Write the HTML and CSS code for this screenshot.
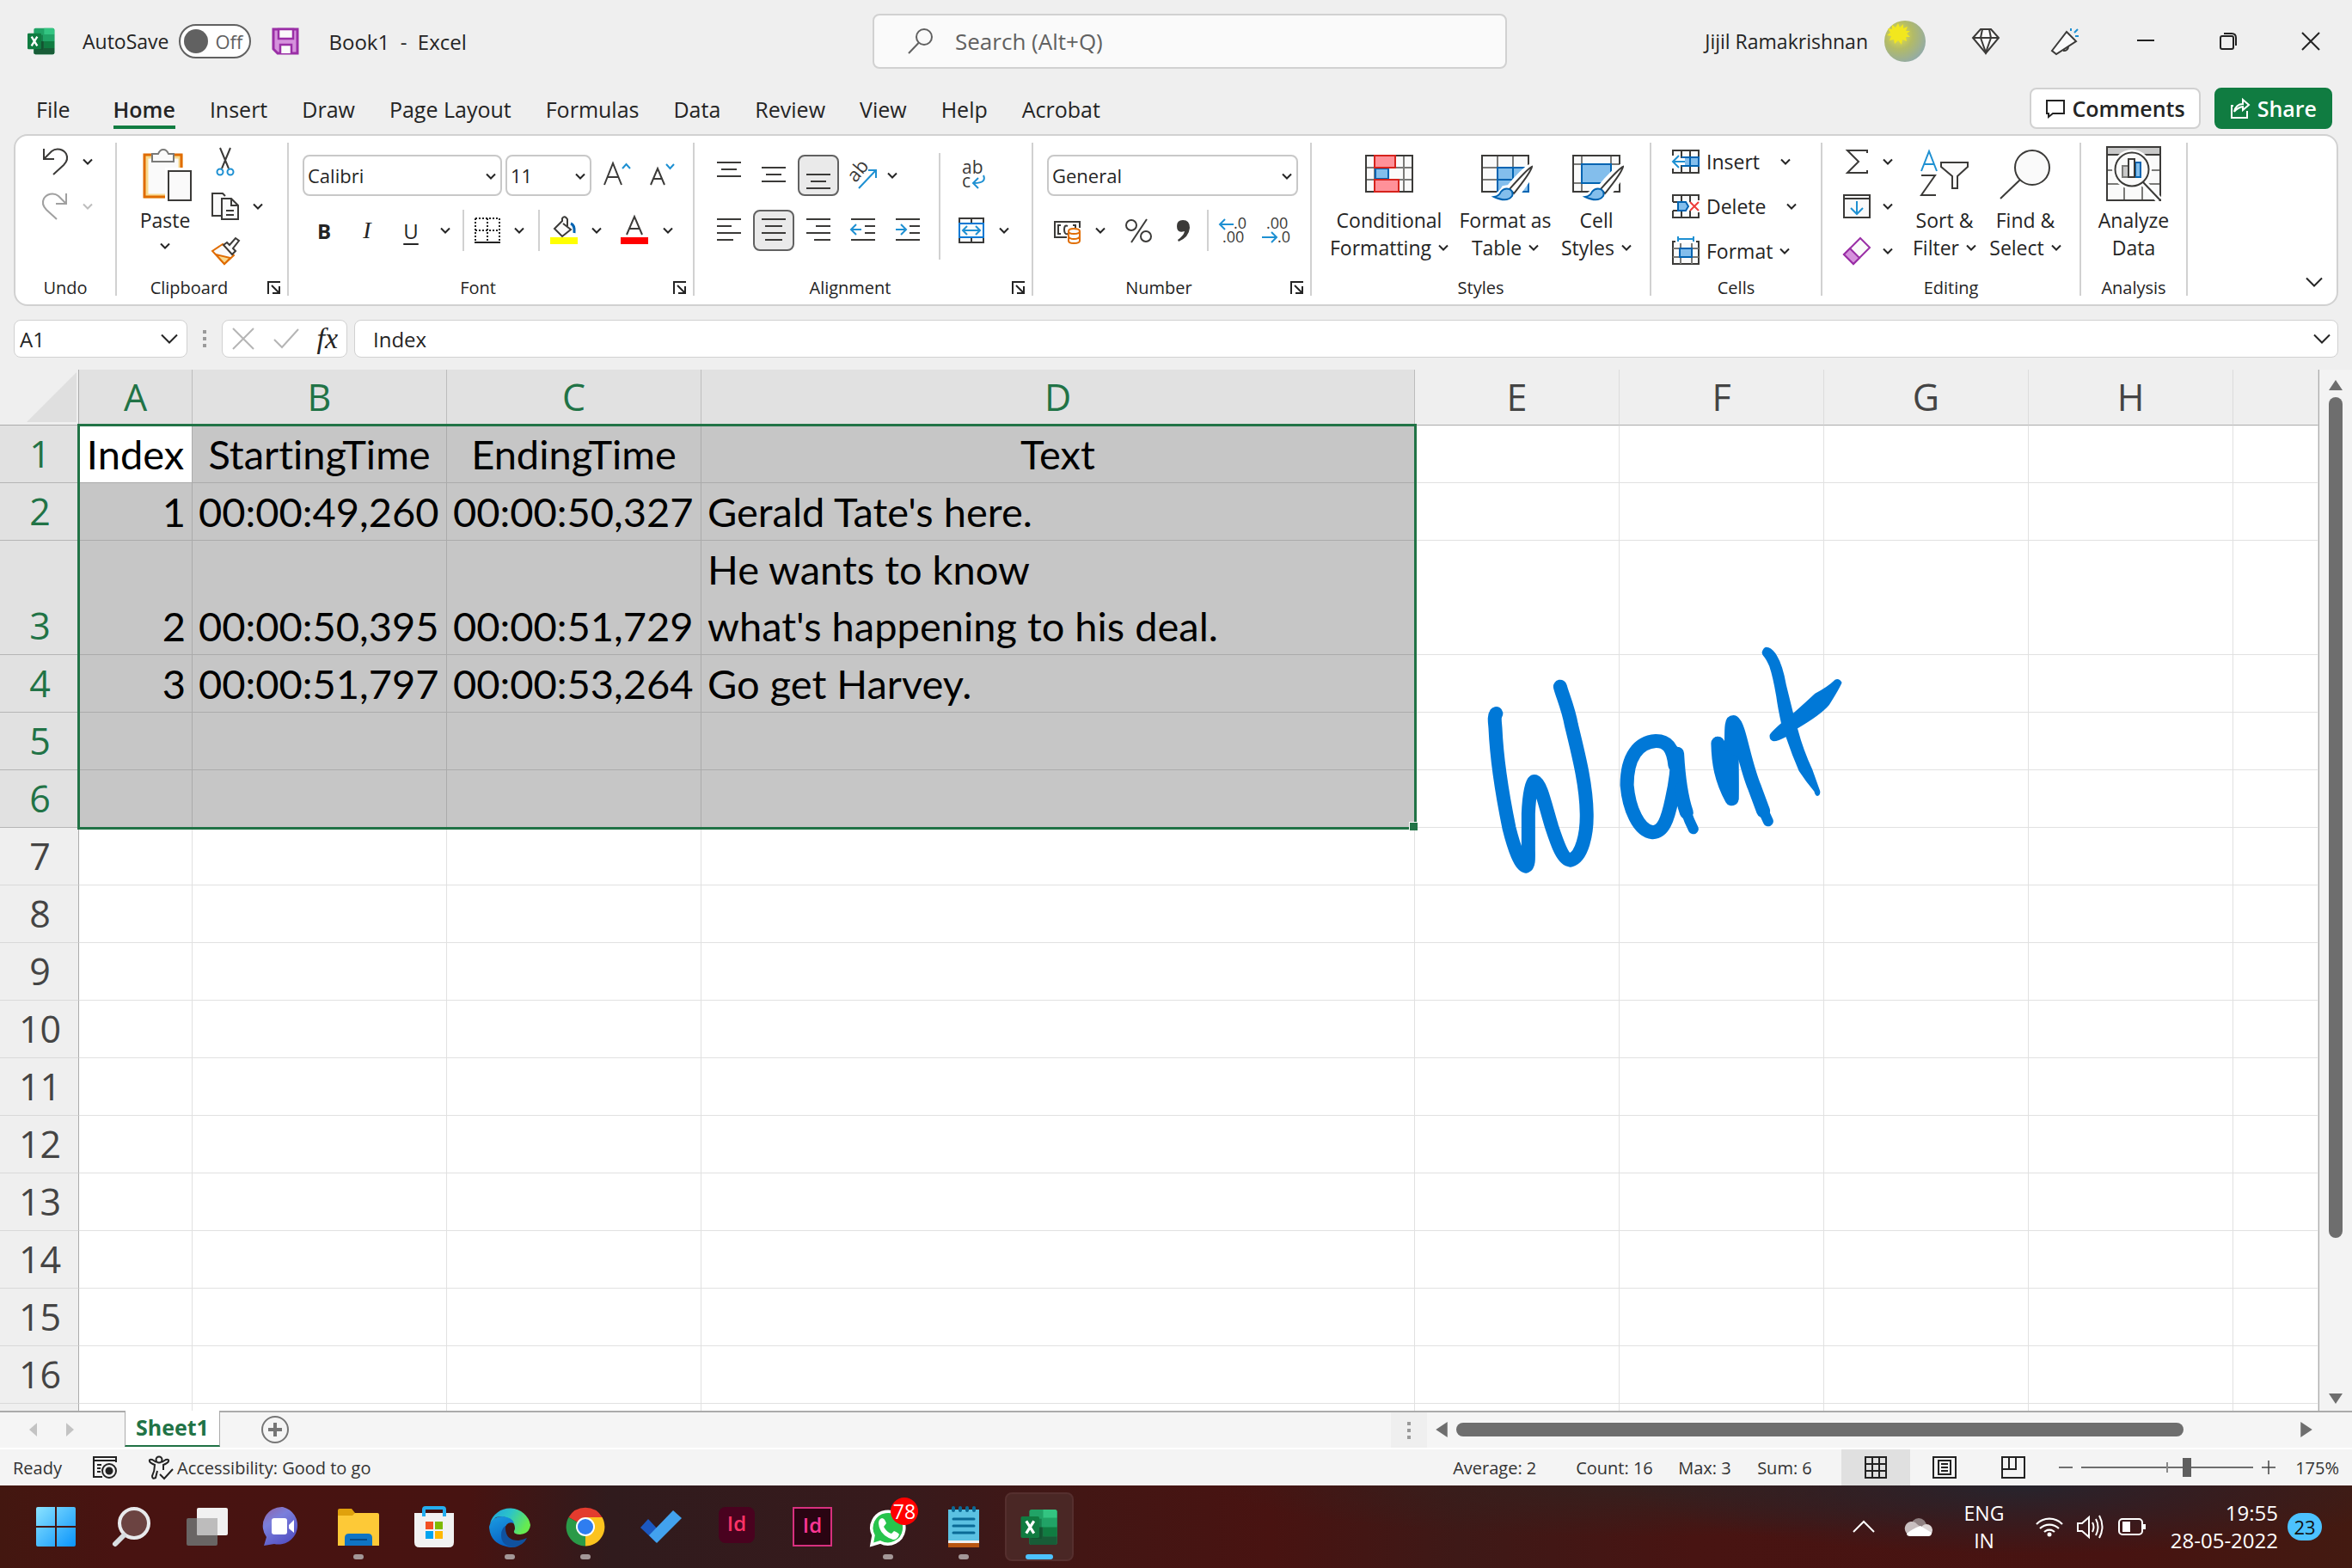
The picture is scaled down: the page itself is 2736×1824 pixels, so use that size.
FILE: index.html
```html
<!DOCTYPE html>
<html lang="en">
<head>
<meta charset="utf-8">
<title>Book1 - Excel</title>
<link rel="stylesheet" href="styles.css">
</head>
<body>
<svg class="defs" aria-hidden="true">
  <symbol id="chev" viewBox="0 0 12 8"><path d="M1 1.5 6 6.5 11 1.5" fill="none" stroke="currentColor" stroke-width="2"/></symbol>
  <symbol id="chev-lg" viewBox="0 0 20 12"><path d="M1 1.500 10 10.500 19 1.500" fill="none" stroke="currentColor" stroke-width="2"/></symbol>
  <symbol id="launch" viewBox="0 0 16 16"><path d="M1 15V1H15M5 5 14 14M14 6V14H6" fill="none" stroke="currentColor" stroke-width="2"/></symbol>
  <symbol id="brush" viewBox="0 0 64 64">
    <path d="M63 22C58 22 43 38 36 47L30 48Q26 56 17 58L34 66L46 58L66 30Z" fill="#fff" stroke="#fff" stroke-width="4"/>
    <path d="M63 24C58 26 45 41 37 50L42 55C50 45 61 32 63 24Z" fill="#fff" stroke="#3b3a38" stroke-width="2"/>
    <path d="M19 59Q25 58 27 53Q31 48 37 50Q42 53 40 58Q34 66 19 59Z" fill="#83beec" stroke="#0063b1" stroke-width="2"/>
  </symbol>
  <symbol id="excel" viewBox="0 0 48 48">
    <rect x="11" y="1" width="36" height="46" rx="3" fill="#21a366"/>
    <path d="M29 1H44Q47 1 47 4V12H29Z" fill="#33c481"/><path d="M29 12H47V24H29Z" fill="#21a366"/>
    <path d="M29 24H47V36H29Z" fill="#107c41"/><path d="M11 24H29V36H47V44Q47 47 44 47H14Q11 47 11 44Z" fill="#185c37"/>
    <rect x="14" y="13" width="13" height="26" fill="#0b4a28" opacity=".4"/>
    <rect x="0" y="10" width="24" height="28" rx="2" fill="#107c41"/>
    <path d="M7 16 17 32M17 16 7 32" stroke="#fff" stroke-width="3.600"/>
  </symbol>
</svg>

<header class="titlebar">
  <div class="title-left">
    <svg class="s32" viewBox="0 0 48 48"><use href="#excel"/></svg>
    <label class="autosave" for="autosave">AutoSave
      <span class="toggle"><input type="checkbox" id="autosave"><span class="knob"></span><span>Off</span></span>
    </label>
    <button class="plain" aria-label="Save"><svg class="s32" viewBox="0 0 32 32"><path d="M2 2H30V30H7L2 25Z" fill="#d592dc" stroke="#9a2fa6" stroke-width="3"/><path d="M8 2H25V13H8ZM10 30V20H23V30" fill="#fafafa" stroke="#9a2fa6" stroke-width="2.500"/></svg></button>
    <span class="doc">Book1&nbsp; -&nbsp; Excel</span>
  </div>
  <label class="search">
    <svg class="s32" viewBox="0 0 32 32" fill="none" stroke="#616161" stroke-width="2"><circle cx="20" cy="11" r="9"/><path d="M13.500 18 2 30"/></svg>
    <input type="text" placeholder="Search (Alt+Q)" aria-label="Search">
  </label>
  <div class="title-right">
    <span class="user">Jijil Ramakrishnan</span>
    <svg class="avatar" viewBox="0 0 48 48"><defs><radialGradient id="sky" cx=".35" cy=".35" r=".75"><stop offset="0" stop-color="#e8e24a"/><stop offset=".45" stop-color="#b3bb66"/><stop offset="1" stop-color="#8fa9ae"/></radialGradient></defs><circle cx="24" cy="24" r="24" fill="url(#sky)"/><path d="M16 3 18 8 22 4 22 9 27 7 25 12 30 12 26 15 30 19 25 19 26 24 21 22 20 28 16 23 12 27 11 22 6 23 8 18 3 17 7 14 4 9 9 10 9 5 13 8Z" fill="#f2e71e"/></svg>
    <button class="win w92" aria-label="Premium"><svg class="s32" viewBox="0 0 32 32" fill="#fafafa" stroke="#3b3a38" stroke-width="2"><path d="M10 2H22L31 12 16 30 1 12Z"/><path fill="none" d="M1 12H31M12 2 10 12 16 29 22 12 20 2"/></svg></button>
    <button class="win w92" aria-label="Coming soon"><svg class="s32" viewBox="0 0 32 32" fill="#fafafa" stroke="#3b3a38" stroke-width="2"><path fill="none" d="M14 27A5 5 0 0 0 20 22"/><path d="M18 5 29 16 6 31 1 27Z"/><path d="M23 1V4M27 6 31 2M28 10H32" stroke="#1e90d2"/></svg></button>
    <button class="win w96" aria-label="Minimize"><svg class="s20" viewBox="0 0 20 20"><path d="M0 9H20" stroke="#222" stroke-width="2"/></svg></button>
    <button class="win w96" aria-label="Restore"><svg class="s20" viewBox="0 0 20 20" fill="none" stroke="#222" stroke-width="2"><rect x="1" y="4" width="15" height="15" rx="2"/><path d="M5 1H14Q19 1 19 6V15"/></svg></button>
    <button class="win w96" aria-label="Close"><svg class="s20" viewBox="0 0 20 20"><path d="M0 0 20 20M20 0 0 20" stroke="#222" stroke-width="2"/></svg></button>
  </div>
</header>

<nav class="tabs">
  <a href="#file" class="file">File</a><a href="#home" class="on">Home</a><a href="#insert">Insert</a><a href="#draw">Draw</a><a href="#layout">Page Layout</a><a href="#formulas">Formulas</a><a href="#data">Data</a><a href="#review">Review</a><a href="#view">View</a><a href="#help">Help</a><a href="#acrobat">Acrobat</a>
  <span class="grow"></span>
  <button class="pill"><svg class="s24" viewBox="0 0 24 24"><path d="M2 3H22V18H9L4 22V18H2Z" fill="none" stroke="#222" stroke-width="2"/></svg>Comments</button>
  <button class="pill share"><svg class="s24" viewBox="0 0 24 24" fill="none" stroke="#fff" stroke-width="2"><path d="M4 9H2V23H20V15"/><path d="M5 16Q7 7 15 7V2L22 8 15 14V10Q9 11 5 16Z"/></svg>Share</button>
</nav>

<section class="ribbon">
  <div class="group g-undo">
    <div class="body stack">
      <div class="line"><button class="w36" aria-label="Undo"><svg class="s32" viewBox="0 0 32 32" fill="none" stroke="#3b3a38" stroke-width="2"><path d="M3 1V13H15"/><path d="M3 13 12 4C18-1 26 2 29 7C32 13 29 17 26 20L14 31"/></svg></button><button class="w40" aria-label="Undo options"><svg class="chev"><use href="#chev"/></svg></button></div>
      <div class="line dim"><button class="w36" aria-label="Redo"><svg class="s32" viewBox="0 0 32 32" fill="none" stroke="#a0a0a0" stroke-width="2"><path d="M29 1V13H17"/><path d="M29 13 20 4C14-1 6 2 3 7C0 13 3 17 6 20L18 31"/></svg></button><button class="w40" aria-label="Redo options"><svg class="chev"><use href="#chev"/></svg></button></div>
    </div>
    <div class="foot"><span>Undo</span></div>
  </div>

  <div class="group g-clip">
    <div class="body">
      <button class="big w84"><svg class="s64" viewBox="0 0 64 64"><path d="M10 12H50V58H10Z" fill="#fafafa" stroke="#f8d98f" stroke-width="5"/><path d="M8 10H51V59H8Z" fill="none" stroke="#e06c00" stroke-width="3"/><path d="M17 9H24Q26 4 30 4Q34 4 36 9H42V18H17Z" fill="#fafafa" stroke="#7a7a78" stroke-width="2"/><path d="M32 25H64V64H32Z" fill="#fff"/><path d="M36 29H62V63H36Z" fill="#fafafa" stroke="#3b3a38" stroke-width="2"/></svg><span>Paste</span><svg class="chev"><use href="#chev"/></svg></button>
      <div class="stack">
        <div class="line"><button class="w56" aria-label="Cut"><svg class="s32" viewBox="0 0 32 32" fill="none" stroke="#3b3a38" stroke-width="2"><path d="M10 0 20 24M22 0 12 24"/><circle cx="10" cy="28" r="3.500" stroke="#1e90d2"/><circle cx="22" cy="28" r="3.500" stroke="#1e90d2"/></svg></button></div>
        <div class="line"><button class="w56" aria-label="Copy"><svg class="s32" viewBox="0 0 32 32" fill="#fafafa" stroke="#3b3a38" stroke-width="2"><path d="M11 27H1V1H13L16 4"/><path d="M12 7H23L31 15V31H12Z"/><path d="M23 7V15H31M17 21H26M17 26H26" fill="none"/></svg></button><button class="w20" aria-label="Copy options"><svg class="chev"><use href="#chev"/></svg></button></div>
        <div class="line"><button class="w56" aria-label="Format Painter"><svg class="s32" viewBox="0 0 32 32"><path d="M1 16 13 8 26 21 15 31Z" fill="#fafafa" stroke="#e06c00" stroke-width="2"/><path d="M5 20 22 24 15 31Z" fill="#f8d98f" stroke="#e06c00" stroke-width="2"/><path d="M14 9 18 6 21 9 28 1 32 4 25 13 28 16 24 20Z" fill="#fafafa" stroke="#3b3a38" stroke-width="2"/></svg></button></div>
      </div>
    </div>
    <div class="foot"><span>Clipboard</span><button class="w30" aria-label="Clipboard settings"><svg class="s16"><use href="#launch"/></svg></button></div>
  </div>

  <div class="group g-font">
    <div class="body rows">
      <div class="line tall">
        <span class="combo w232"><select aria-label="Font"><option>Calibri</option></select><svg class="chev"><use href="#chev"/></svg></span>
        <span class="combo w100"><select aria-label="Font size"><option>11</option></select><svg class="chev"><use href="#chev"/></svg></span>
        <button class="w52" aria-label="Increase font size"><svg class="s32" viewBox="0 0 32 32" fill="none" stroke="#3b3a38" stroke-width="2"><path d="M1 27 11 2 21 27M5 18H17"/><path d="M22 8 26.500 3 31 8" stroke="#1e90d2"/></svg></button>
        <button class="w52" aria-label="Decrease font size"><svg class="s32" viewBox="0 0 32 32" fill="none" stroke="#3b3a38" stroke-width="2"><path d="M3 27 11 8 19 27M6 20H16"/><path d="M21 3 25.500 8 30 3" stroke="#1e90d2"/></svg></button>
      </div>
      <div class="line tall">
        <button class="w50 bold">B</button><button class="w50 ital">I</button><button class="w52 under">U</button><button class="w28" aria-label="Underline options"><svg class="chev"><use href="#chev"/></svg></button>
        <i class="sep w14"></i>
        <button class="w42" aria-label="Borders"><svg class="s32" viewBox="0 0 32 32" fill="none" stroke="#222" stroke-width="2"><path d="M2 2H30M2 16H30M2 2V28M16 2V28M30 2V28" stroke-dasharray="2 2"/><path d="M1 30H31"/></svg></button><button class="w32" aria-label="Border options"><svg class="chev"><use href="#chev"/></svg></button>
        <i class="sep w14"></i>
        <button class="w44" aria-label="Fill color"><svg class="s32" viewBox="0 0 32 32" fill="none" stroke="#3b3a38" stroke-width="2"><path d="M15 8 24 15 14 23 5 14 14 5V2Q17-2 20 3V11" fill="#fafafa"/><path d="M24 8Q29 10 28 19" stroke="#0063b1" stroke-width="3"/><path d="M0 24H32V32H0Z" fill="#ffff00" stroke="none"/></svg></button><button class="w32" aria-label="Fill color options"><svg class="chev"><use href="#chev"/></svg></button>
        <button class="w56" aria-label="Font color"><svg class="s32" viewBox="0 0 32 32" fill="none" stroke="#3b3a38" stroke-width="2"><path d="M7 21 16 0 25 21M10 14H22"/><path d="M0 24H32V32H0Z" fill="#ff0000" stroke="none"/></svg></button><button class="w22" aria-label="Font color options"><svg class="chev"><use href="#chev"/></svg></button>
      </div>
    </div>
    <div class="foot"><span>Font</span><button class="w30" aria-label="Font settings"><svg class="s16"><use href="#launch"/></svg></button></div>
  </div>

  <div class="group g-align">
    <div class="body">
      <div class="rows w256">
        <div class="line tall gap4">
          <button class="w48" aria-label="Top align"><svg class="ln" viewBox="0 0 32 32"><path d="M2 1H30M7 9H25M2 17H30"/></svg></button>
          <button class="w48" aria-label="Middle align"><svg class="ln" viewBox="0 0 32 32"><path d="M2 7H30M7 15H25M2 23H30"/></svg></button>
          <button class="w48 pressed" aria-label="Bottom align"><svg class="ln" viewBox="0 0 32 32"><path d="M2 15H30M7 23H25M2 31H30"/></svg></button>
          <button class="w48" aria-label="Orientation"><svg class="s32" viewBox="0 0 32 32"><text x="2" y="22" font-size="22" transform="rotate(-50 8 18)" fill="#3b3a38">ab</text><path d="M11 31 31 10M22 10H31V19" fill="none" stroke="#1e90d2" stroke-width="2"/></svg></button>
          <button class="w20" aria-label="Orientation options"><svg class="chev"><use href="#chev"/></svg></button>
        </div>
        <div class="line tall gap4">
          <button class="w48" aria-label="Align left"><svg class="ln" viewBox="0 0 32 32"><path d="M2 3H30M2 11H19M2 19H30M2 27H21"/></svg></button>
          <button class="w48 pressed" aria-label="Center"><svg class="ln" viewBox="0 0 32 32"><path d="M2 3H30M6 11H26M2 19H30M6 27H26"/></svg></button>
          <button class="w48" aria-label="Align right"><svg class="ln" viewBox="0 0 32 32"><path d="M2 3H30M13 11H30M2 19H30M11 27H30"/></svg></button>
          <button class="w48" aria-label="Decrease indent"><svg class="ln" viewBox="0 0 32 32"><path d="M2 3H30M18 11H30M18 19H30M2 27H30"/><path d="M14 15H3M8 9 2 15 8 21" stroke="#1e90d2"/></svg></button>
          <button class="w48" aria-label="Increase indent"><svg class="ln" viewBox="0 0 32 32"><path d="M2 3H30M18 11H30M18 19H30M2 27H30"/><path d="M2 15H13M8 9 14 15 8 21" stroke="#1e90d2"/></svg></button>
        </div>
      </div>
      <i class="sep w26 long"></i>
      <div class="rows">
        <div class="line tall"><button class="w52" aria-label="Wrap text"><svg class="s32" viewBox="0 0 32 32"><text x="3" y="14" font-size="21" fill="#3b3a38">ab</text><text x="3" y="30" font-size="21" fill="#3b3a38">c</text><path d="M28 16Q32 25 17 25M22 19 16 25 22 31" fill="none" stroke="#1e90d2" stroke-width="2"/></svg></button></div>
        <div class="line tall"><button class="w48" aria-label="Merge and center"><svg class="s32" viewBox="0 0 32 32" fill="#fafafa" stroke="#3b3a38" stroke-width="2"><path d="M2 2H30V30H2ZM16 2V30"/><path d="M2 8H30V24H2Z" fill="#fafafa" stroke="#0078d4"/><path d="M6 16H26M11 11 6 16 11 21M21 11 26 16 21 21" fill="none" stroke="#1e90d2"/></svg></button><button class="w28" aria-label="Merge options"><svg class="chev"><use href="#chev"/></svg></button></div>
      </div>
    </div>
    <div class="foot"><span>Alignment</span><button class="w30" aria-label="Alignment settings"><svg class="s16"><use href="#launch"/></svg></button></div>
  </div>

  <div class="group g-num">
    <div class="body rows">
      <div class="line tall"><span class="combo w292"><select aria-label="Number format"><option>General</option></select><svg class="chev"><use href="#chev"/></svg></span></div>
      <div class="line tall">
        <button class="w48" aria-label="Accounting format"><svg class="s32" viewBox="0 0 32 32" fill="none" stroke="#3b3a38" stroke-width="2"><path d="M30 13V6H1V24H15"/><path d="M8 10H5V20H8M16 11Q12 9 12 15Q12 21 16 20M22 10H25V13"/><path d="M17 17V28Q17 31 23 31Q30 31 30 28V17Q30 14 23 14Q17 14 17 17Q17 20 23 20Q30 20 30 17M17 23Q18 26 23 26Q29 26 30 23" fill="#fafafa" stroke="#e06c00"/></svg></button><button class="w28" aria-label="Accounting options"><svg class="chev"><use href="#chev"/></svg></button>
        <button class="w60" aria-label="Percent style"><svg class="s32" viewBox="0 0 32 32" fill="none" stroke="#3b3a38" stroke-width="2"><circle cx="8" cy="10" r="6"/><circle cx="25" cy="23" r="6"/><path d="M26 3 8 30"/></svg></button>
        <button class="w44" aria-label="Comma style"><svg class="s32" viewBox="0 0 32 32"><path d="M16 4Q24 4 24 13Q23 24 11 29L10 27Q17 22 18 17Q9 20 9 11Q9 4 16 4Z" fill="#3b3a38"/></svg></button>
        <i class="sep w14"></i>
        <button class="w42" aria-label="Increase decimal"><svg class="s32" viewBox="0 0 32 32"><text x="18" y="14" font-size="18" fill="#3b3a38">.0</text><text x="5" y="30" font-size="18" fill="#3b3a38">.00</text><path d="M18 9H2M8 3 2 9 8 15" fill="none" stroke="#1e90d2" stroke-width="2"/></svg></button>
        <button class="w60" aria-label="Decrease decimal"><svg class="s32" viewBox="0 0 32 32"><text x="5" y="14" font-size="18" fill="#3b3a38">.00</text><text x="18" y="30" font-size="18" fill="#3b3a38">.0</text><path d="M0 24H16M11 18 17 24 11 30" fill="none" stroke="#1e90d2" stroke-width="2"/></svg></button>
      </div>
    </div>
    <div class="foot"><span>Number</span><button class="w30" aria-label="Number settings"><svg class="s16"><use href="#launch"/></svg></button></div>
  </div>

  <div class="group g-styles">
    <div class="body">
      <button class="big w152"><svg class="s64" viewBox="0 0 64 64"><path d="M5 11H59V53H5Z" fill="#fafafa"/><path d="M15 11V53M49 11V53M5 25H59M5 39H59" stroke="#7a7a78" stroke-width="2"/><path d="M5 11H59V53H5Z" fill="none" stroke="#3b3a38" stroke-width="2"/><path d="M16 26H31V38H16Z" fill="#83beec" stroke="#0063b1" stroke-width="2"/><path d="M15 11H39V25H15ZM15 39H43V53H15Z" fill="#ff9199" stroke="#d6231c" stroke-width="2"/></svg><span>Conditional</span><span>Formatting <svg class="chev"><use href="#chev"/></svg></span></button>
      <button class="big w118"><svg class="s64" viewBox="0 0 64 64"><path d="M5 11H59V53H5Z" fill="#fafafa"/><path d="M23 11V25M41 11V25M5 25H23M5 39H23" stroke="#7a7a78" stroke-width="2"/><path d="M5 11H59V53H5Z" fill="none" stroke="#3b3a38" stroke-width="2"/><path d="M23 25H59V53H23ZM41 25V53M23 39H59" fill="#83beec" stroke="#0063b1" stroke-width="2"/><use href="#brush" width="64" height="64"/></svg><span>Format as</span><span>Table <svg class="chev"><use href="#chev"/></svg></span></button>
      <button class="big w94"><svg class="s64" viewBox="0 0 64 64"><path d="M5 11H59V53H5Z" fill="#fafafa"/><path d="M15 11V53M49 11V53M5 21H59M5 43H59" stroke="#7a7a78" stroke-width="2"/><path d="M5 11H59V53H5Z" fill="none" stroke="#3b3a38" stroke-width="2"/><path d="M15 21H49V43H15Z" fill="#83beec" stroke="#0063b1" stroke-width="2"/><use href="#brush" width="64" height="64"/></svg><span>Cell</span><span>Styles <svg class="chev"><use href="#chev"/></svg></span></button>
    </div>
    <div class="foot"><span>Styles</span></div>
  </div>

  <div class="group g-cells">
    <div class="body stack">
      <button class="cmd"><svg class="s32" viewBox="0 0 32 32" fill="#fafafa" stroke="#3b3a38" stroke-width="2"><path d="M1 3H31V29H1ZM11 3V29M21 3V29"/><path d="M12 11H31V21H12ZM21 11V21" fill="#83beec" stroke="#0063b1"/><path d="M0 9H9V12H15V20H9V24H0Z" fill="#fff" stroke="none"/><path d="M15 16H1M8 9 1 16 8 23" fill="none" stroke="#1e90d2"/></svg><span>Insert</span><svg class="chev far"><use href="#chev"/></svg></button>
      <button class="cmd"><svg class="s32" viewBox="0 0 32 32" fill="#fafafa" stroke="#3b3a38" stroke-width="2"><path d="M1 11V3H31V9M11 3V11M21 3V11M1 21V29H31V23M11 21V29M21 21V29M1 11H6M1 21H6"/><path d="M7 11H16L19 16 16 21H7Z" fill="#83beec" stroke="#0063b1"/><path d="M21 11 31 21M31 11 21 21" stroke="#ee3d3a"/></svg><span>Delete</span><svg class="chev far"><use href="#chev"/></svg></button>
      <button class="cmd"><svg class="s32" viewBox="0 0 32 32" fill="#fafafa" stroke="#3b3a38" stroke-width="2"><path d="M1 5H31V31H1Z" /><path d="M4 4H28" stroke="#fff" stroke-width="5"/><path d="M10 7V31M23 7V31M1 13H31M1 23H31" stroke="#7a7a78"/><path d="M9 13H23V23H9Z" fill="#83beec" stroke="#0063b1"/><path d="M7 2H25M7-1V5M25-1V5" stroke="#1e90d2"/></svg><span>Format</span><svg class="chev"><use href="#chev"/></svg></button>
    </div>
    <div class="foot"><span>Cells</span></div>
  </div>

  <div class="group g-edit">
    <div class="body">
      <div class="stack">
        <div class="line"><button class="w40" aria-label="AutoSum"><svg class="s32" viewBox="0 0 32 32" fill="none" stroke="#3b3a38" stroke-width="2"><path d="M28 6V3H5L18 16 5 29H28V26"/></svg></button><button class="w32" aria-label="AutoSum options"><svg class="chev"><use href="#chev"/></svg></button></div>
        <div class="line"><button class="w40" aria-label="Fill"><svg class="s32" viewBox="0 0 32 32" fill="#fafafa" stroke="#3b3a38" stroke-width="2"><path d="M1 3H31V29H1ZM1 7H31"/><path d="M16 10V24M9 18 16 25 23 18" fill="none" stroke="#1e90d2"/></svg></button><button class="w32" aria-label="Fill options"><svg class="chev"><use href="#chev"/></svg></button></div>
        <div class="line"><button class="w40" aria-label="Clear"><svg class="s32" viewBox="0 0 32 32" fill="#fafafa" stroke="#9a2fa6" stroke-width="2"><path d="M20 1 31 12 12 31 1 20Z"/><path d="M8 13 1 20 12 31 19 24Z" fill="#d592dc"/></svg></button><button class="w32" aria-label="Clear options"><svg class="chev"><use href="#chev"/></svg></button></div>
      </div>
      <button class="big w100"><svg class="s64" viewBox="0 0 64 64" fill="none" stroke="#3b3a38" stroke-width="2"><path d="M5 29 14 6 23 29M8 21H20" stroke="#1e90d2"/><path d="M5 34H21L5 57H22"/><path d="M28 19H59V24L47 35V49H41V35L28 24Z" fill="#fafafa"/></svg><span>Sort &amp;</span><span>Filter <svg class="chev"><use href="#chev"/></svg></span></button>
      <button class="big w88"><svg class="s64" viewBox="0 0 64 64" fill="none" stroke="#3b3a38" stroke-width="2"><circle cx="40" cy="25" r="20" fill="#fafafa"/><path d="M26 39 3 61"/></svg><span>Find &amp;</span><span>Select <svg class="chev"><use href="#chev"/></svg></span></button>
    </div>
    <div class="foot"><span>Editing</span></div>
  </div>

  <div class="group g-analysis">
    <div class="body">
      <button class="big w122"><svg class="s64" viewBox="0 0 64 64" fill="none" stroke="#3b3a38" stroke-width="2"><path d="M1 1H63V63H1Z" fill="#fafafa"/><path d="M1 1H63V10H1Z" fill="#c8c8c8"/><path d="M1 28H63M1 44H63M21 44V63M42 44V63" stroke="#7a7a78"/><path d="M1 1H63V63H1ZM1 10H63"/><circle cx="30" cy="27" r="23" fill="#fff" stroke="none"/><path d="M43 42 62 63" stroke="#fff" stroke-width="8"/><circle cx="30" cy="27" r="19.500" fill="#fafafa"/><path d="M43 42 63 63"/><path d="M19 23H26V36H19Z" fill="#c8c8c8" stroke="#7a7a78"/><path d="M34 19H40V36H34Z" fill="#83beec" stroke="#0063b1"/><path d="M26 15H33V36H26Z" fill="#fafafa"/></svg><span>Analyze</span><span>Data</span></button>
    </div>
    <div class="foot"><span>Analysis</span></div>
  </div>
  <button class="collapse" aria-label="Collapse ribbon"><svg class="chevlg"><use href="#chev-lg"/></svg></button>
</section>

<div class="fbar">
  <div class="namebox"><input type="text" value="A1" aria-label="Name box"><svg class="chevlg"><use href="#chev-lg"/></svg></div>
  <i class="dots"></i>
  <div class="fx">
    <button aria-label="Cancel"><svg class="s28" viewBox="0 0 28 28"><path d="M2 2 26 26M26 2 2 26" stroke="#b5b5b5" stroke-width="2"/></svg></button>
    <button aria-label="Enter"><svg class="s28" viewBox="0 0 28 28"><path d="M0 15 9 24 28 3" fill="none" stroke="#b5b5b5" stroke-width="2"/></svg></button>
    <button class="fn">fx</button>
  </div>
  <div class="formula"><input type="text" value="Index" aria-label="Formula"><svg class="chevlg"><use href="#chev-lg"/></svg></div>
</div>

<main class="work">
  <div class="grid">
    <table>
      <colgroup><col class="c0"><col class="ca"><col class="cb"><col class="cb"><col class="cd"><col class="ce"><col class="ce"><col class="ce"><col class="ce"><col></colgroup>
      <thead><tr><th class="corner"><svg class="tri" viewBox="0 0 58 58"><path d="M58 0V58H0Z" fill="#dfdfdf"/></svg></th><th class="sel">A</th><th class="sel">B</th><th class="sel">C</th><th class="sel">D</th><th>E</th><th>F</th><th>G</th><th>H</th><th></th></tr></thead>
      <tbody>
        <tr class="s"><th>1</th><td class="active">Index</td><td class="mid">StartingTime</td><td class="mid">EndingTime</td><td class="mid">Text</td><td></td><td></td><td></td><td></td><td></td></tr>
        <tr class="s"><th>2</th><td class="num">1</td><td>00:00:49,260</td><td>00:00:50,327</td><td>Gerald Tate's here.</td><td></td><td></td><td></td><td></td><td></td></tr>
        <tr class="s"><th>3</th><td class="num">2</td><td>00:00:50,395</td><td>00:00:51,729</td><td>He wants to know<br>what's happening to his deal.</td><td></td><td></td><td></td><td></td><td></td></tr>
        <tr class="s"><th>4</th><td class="num">3</td><td>00:00:51,797</td><td>00:00:53,264</td><td>Go get Harvey.</td><td></td><td></td><td></td><td></td><td></td></tr>
        <tr class="s"><th>5</th><td></td><td></td><td></td><td></td><td></td><td></td><td></td><td></td><td></td></tr>
        <tr class="s"><th>6</th><td></td><td></td><td></td><td></td><td></td><td></td><td></td><td></td><td></td></tr>
        <tr><th>7</th><td></td><td></td><td></td><td></td><td></td><td></td><td></td><td></td><td></td></tr>
        <tr><th>8</th><td></td><td></td><td></td><td></td><td></td><td></td><td></td><td></td><td></td></tr>
        <tr><th>9</th><td></td><td></td><td></td><td></td><td></td><td></td><td></td><td></td><td></td></tr>
        <tr><th>10</th><td></td><td></td><td></td><td></td><td></td><td></td><td></td><td></td><td></td></tr>
        <tr><th>11</th><td></td><td></td><td></td><td></td><td></td><td></td><td></td><td></td><td></td></tr>
        <tr><th>12</th><td></td><td></td><td></td><td></td><td></td><td></td><td></td><td></td><td></td></tr>
        <tr><th>13</th><td></td><td></td><td></td><td></td><td></td><td></td><td></td><td></td><td></td></tr>
        <tr><th>14</th><td></td><td></td><td></td><td></td><td></td><td></td><td></td><td></td><td></td></tr>
        <tr><th>15</th><td></td><td></td><td></td><td></td><td></td><td></td><td></td><td></td><td></td></tr>
        <tr><th>16</th><td></td><td></td><td></td><td></td><td></td><td></td><td></td><td></td><td></td></tr>
        <tr><th></th><td></td><td></td><td></td><td></td><td></td><td></td><td></td><td></td><td></td></tr>
      </tbody>
    </table>
    <div class="selection"><i class="handle"></i></div>
    <svg class="ink" viewBox="0 0 1568 1080" preserveAspectRatio="none">
      <g fill="none" stroke="#0078d7" stroke-width="16" stroke-linecap="round" stroke-linejoin="round">
        <path vector-effect="non-scaling-stroke" d="M404 390C398 402 401 420 402 440C405 530 415 640 438 790C452 865 468 920 481 923C490 920 488 890 488 860V740C490 670 498 625 505 627C520 634 532 710 549 785C565 850 578 900 598 902C628 890 641 810 640 740C639 640 620 540 600 430C592 370 575 320 571 296"/>
        <path vector-effect="non-scaling-stroke" d="M870 570C865 510 850 485 820 486C775 490 745 540 745 640C750 720 775 800 812 805C840 803 851 760 862 690C872 630 877 580 876 530C879 600 886 680 900 735"/>
        <path vector-effect="non-scaling-stroke" d="M982 494C983 560 990 620 1018 688C1020 650 1017 560 1017 480C1017 430 1019 420 1022 420C1038 434 1050 560 1078 650L1100 730"/>
      </g>
      <g fill="none" stroke="#0078d7" stroke-width="12" stroke-linecap="round">
        <path vector-effect="non-scaling-stroke" d="M882 650Q897 740 918 793M1082 670Q1100 730 1113 766"/>
      </g>
      <path fill="#0078d7" d="M966 490Q970 470 980 470Q995 475 1000 515L1036 545V690Q1030 710 1018 710Q1005 705 1000 680Q985 650 978 610Z"/>
      <path fill="#0078d7" d="M1117 465Q1120 455 1150 420L1180 387Q1215 345 1235 320Q1270 295 1287 272Q1298 265 1305 282Q1300 300 1272 360Q1250 395 1188 443L1157 473Q1140 485 1127 487Q1115 482 1117 465ZM1097 175Q1100 160 1108 158Q1120 158 1132 180Q1150 215 1160 290L1178 388L1190 445Q1205 520 1228 585Q1240 630 1248 660Q1250 675 1241 678Q1235 675 1233 662Q1210 625 1193 590Q1175 535 1160 475L1147 425Q1138 370 1134 330Q1125 260 1116 225Q1108 200 1100 188Q1096 182 1097 175Z"/>
    </svg>
  </div>
  <div class="vscroll"><svg class="arr" viewBox="0 0 16 12"><path d="M8 0 16 12H0Z"/></svg><div class="track"><i></i></div><svg class="arr" viewBox="0 0 16 12"><path d="M0 0H16L8 12Z"/></svg></div>
</main>

<div class="sheets">
  <button class="nav" aria-label="Previous sheet"><svg class="na" viewBox="0 0 8 14"><path d="M8 0V14L0 7Z" fill="#c3c3c3"/></svg></button>
  <button class="nav" aria-label="Next sheet"><svg class="na" viewBox="0 0 8 14"><path d="M0 0V14L8 7Z" fill="#c3c3c3"/></svg></button>
  <a class="sheet" href="#sheet1">Sheet1</a>
  <button class="add" aria-label="New sheet"><svg class="s32" viewBox="0 0 32 32"><circle cx="16" cy="16" r="15" fill="none" stroke="#767676" stroke-width="2"/><path d="M16 8V24M8 16H24" stroke="#767676" stroke-width="4"/></svg></button>
  <span class="grow"></span>
  <span class="split"><i class="dots"></i></span>
  <div class="hscroll"><svg class="ah" viewBox="0 0 12 16"><path d="M12 0V16L0 8Z"/></svg><div class="track"><i></i></div><svg class="ah" viewBox="0 0 12 16"><path d="M0 0V16L12 8Z"/></svg></div>
</div>

<footer class="status">
  <span class="ready">Ready</span>
  <svg class="s28 macro" viewBox="0 0 28 28" fill="none" stroke="#222" stroke-width="2"><path d="M11 25H1V2H27V8M1 6H27M5 11H10M5 15H9M5 19H9"/><circle cx="19" cy="18" r="8"/><circle cx="19" cy="18" r="3.500" fill="#222"/></svg>
  <svg class="s30" viewBox="0 0 30 28" fill="none" stroke="#222" stroke-width="2"><circle cx="13" cy="5" r="3.500"/><path d="M10 8 5 5Q1 4 2 7Q3 9 8 11Q8 18 5 24Q5 28 9 26L11 18M16 8 21 5Q25 4 24 7Q23 9 18 11V17M14 22 19 27 29 16"/></svg>
  <span>Accessibility: Good to go</span>
  <span class="grow"></span>
  <span class="w144">Average: 2</span><span class="w120">Count: 16</span><span class="w92l">Max: 3</span><span class="w98">Sum: 6</span>
  <button class="view on" aria-label="Normal"><svg class="s28" viewBox="0 0 28 28"><path d="M2 2H26V26H2ZM10 2V26M18 2V26M2 10H26M2 18H26"/></svg></button>
  <button class="view" aria-label="Page layout"><svg class="s28" viewBox="0 0 28 28"><path d="M1 2H27V26H1ZM7 6H21V22H7ZM10 10H18M10 14H18M10 18H18"/></svg></button>
  <button class="view" aria-label="Page break preview"><svg class="s28" viewBox="0 0 28 28"><path d="M1 2H27V26H1ZM1 16H17V2M9 2V16"/></svg></button>
  <button class="zm" aria-label="Zoom out"><svg class="s16" viewBox="0 0 16 16"><path d="M0 8H16" stroke="#444" stroke-width="1.500"/></svg></button>
  <input class="zoom" type="range" min="0" max="200" value="124" aria-label="Zoom">
  <button class="zm" aria-label="Zoom in"><svg class="s16" viewBox="0 0 16 16"><path d="M0 8H16M8 0V16" stroke="#444" stroke-width="1.500"/></svg></button>
  <span class="pct">175%</span>
</footer>

<div class="taskbar">
  <button aria-label="Start"><svg class="s48" viewBox="0 0 48 48"><defs><linearGradient id="win" x1="0" y1="0" x2="1" y2="1"><stop offset="0" stop-color="#8be3ff"/><stop offset="1" stop-color="#0a94fb"/></linearGradient></defs><path d="M1 3Q1 1 3 1H23V23H1ZM25 1H45Q47 1 47 3V23H25ZM1 25H23V47H3Q1 47 1 45ZM25 25H47V45Q47 47 45 47H25Z" fill="url(#win)"/></svg></button>
  <button aria-label="Search"><svg class="s48" viewBox="0 0 48 48"><circle cx="27" cy="20" r="17" fill="#6b4341" stroke="#e8eaec" stroke-width="4"/><path d="M15 34 5 44" stroke="#d8dde0" stroke-width="6" stroke-linecap="round"/></svg></button>
  <button aria-label="Task view"><svg class="s48" viewBox="0 0 48 48"><rect x="0" y="14" width="36" height="32" rx="2" fill="#696564"/><rect x="12" y="2" width="36" height="32" rx="2" fill="#f1f1f1"/><path d="M12 14H36V34H14Q12 34 12 32Z" fill="#bdbcbc"/></svg></button>
  <button aria-label="Chat"><svg class="s48" viewBox="0 0 48 48"><defs><linearGradient id="cht" x1="0" y1="0" x2=".6" y2="1"><stop offset="0" stop-color="#8f62a5"/><stop offset=".4" stop-color="#7a7fdc"/><stop offset="1" stop-color="#5552c4"/></linearGradient></defs><path d="M24 1A22 22 0 1 1 14 44L2 46 5 36A22 22 0 0 1 24 1Z" fill="url(#cht)"/><rect x="11" y="14" width="18" height="19" rx="3" fill="#fff"/><path d="M31 22 37 16V31L31 26Z" fill="#fff"/></svg></button>
  <button class="run" aria-label="File Explorer"><svg class="s48" viewBox="0 0 48 48"><path d="M0 5Q0 3 2 3H16L20 8H46V20H0Z" fill="#e0a10c"/><path d="M0 11H17L20 8H46Q48 8 48 10V46H0Z" fill="#fdc937"/><path d="M8 46V37Q8 32 13 32H35Q40 32 40 37V46Z" fill="#0f74c4"/><path d="M14 39H34" stroke="#074a86" stroke-width="2"/></svg></button>
  <button aria-label="Store"><svg class="s48" viewBox="0 0 48 48"><path d="M1 8H47V42Q47 48 41 48H7Q1 48 1 42Z" fill="#f1f2f2"/><path d="M12 12V4Q12 2 14 2H34Q36 2 36 4V12" fill="none" stroke="#24aef0" stroke-width="4"/><path d="M14 18H23V27H14Z" fill="#f25022"/><path d="M25 18H34V27H25Z" fill="#7fba00"/><path d="M14 29H23V38H14Z" fill="#00a4ef"/><path d="M25 29H34V38H25Z" fill="#ffb900"/></svg></button>
  <button class="run" aria-label="Edge"><svg class="s48" viewBox="0 0 48 48"><defs><linearGradient id="edg" x1="0" y1="0" x2="1" y2=".4"><stop offset="0" stop-color="#1e9fe0"/><stop offset=".5" stop-color="#2cc4c8"/><stop offset="1" stop-color="#66ea50"/></linearGradient><linearGradient id="edb" x1="0" y1="0" x2=".4" y2="1"><stop offset="0" stop-color="#1b9de2"/><stop offset="1" stop-color="#0862c4"/></linearGradient></defs><path d="M1 20A24 23 0 0 1 48 22Q47 32 36 33Q28 33 29 29Q31 26 29 21Q22 10 8 13Z" fill="url(#edg)"/><path d="M0 24Q3 12 16 12Q27 13 29 20Q20 17 18 27Q18 38 32 47Q26 49 20 47Q1 43 0 24Z" fill="url(#edb)"/><path d="M19 23Q18 40 34 40Q40 39 44 37Q40 46 28 48Q14 46 14 34Q14 26 19 23Z" fill="#10519e"/></svg></button>
  <button class="run" aria-label="Chrome"><svg class="s48" viewBox="0 0 48 48"><path d="M24 24 4.500 13A22.500 22.500 0 0 1 43.500 13Z" fill="#e33b2e"/><path d="M24 24 43.500 13A22.500 22.500 0 0 1 24 46.500Z" fill="#fcc31e"/><path d="M24 24V46.500A22.500 22.500 0 0 1 4.500 13Z" fill="#2a9a48"/><path d="M24 13H43.500L33 29 24 46.500 33 29Z" fill="#fcc31e"/><circle cx="24" cy="24" r="11" fill="#fff"/><circle cx="24" cy="24" r="9" fill="#2e7df0"/></svg></button>
  <button aria-label="To Do"><svg class="s48" viewBox="0 0 48 48"><path d="M0 25 9 15 23 30 18 42Z" fill="#1b58c0"/><path d="M10 34 38 5 48 14 19 43Z" fill="#42a2ee"/></svg></button>
  <button class="id1"><span>Id</span></button>
  <button class="id2"><span>Id</span></button>
  <button class="run wa" aria-label="WhatsApp"><svg class="s48" viewBox="0 0 48 48"><path d="M5 45 7 34A19 19 0 1 1 15 42Z" fill="#27c44c" stroke="#fff" stroke-width="3.500"/><path d="M17 14Q20 14 22 20L19 24Q23 31 28 32L31 29Q36 31 37 33Q35 39 30 39Q14 34 13 20Q13 15 17 14Z" fill="#fff"/></svg><b>78</b></button>
  <button class="run" aria-label="Notepad"><svg class="s48" viewBox="0 0 48 48"><path d="M6 40H42V48H6Z" fill="#b85510"/><path d="M6 38H42V43H6Z" fill="#eee"/><path d="M6 4H42V40H6Z" fill="#5bc1e2"/><path d="M12 15H36M12 23H36M12 31H36" stroke="#0a6a96" stroke-width="3" stroke-linecap="round"/><path d="M12 2V5M20 2V5M28 2V5M36 2V5" stroke="#0a6a96" stroke-width="4" stroke-linecap="round"/></svg></button>
  <button class="active-app" aria-label="Excel"><svg class="s48" viewBox="0 0 48 48"><use href="#excel" x="1" y="3" width="46" height="43"/></svg></button>
  <span class="grow"></span>
  <button class="tray w26t" aria-label="Hidden icons"><svg viewBox="0 0 26 14" class="tc"><path d="M1 13 13 1 25 13" fill="none" stroke="#fff" stroke-width="2"/></svg></button>
  <svg class="s32" viewBox="0 0 32 32"><circle cx="16" cy="15" r="9" fill="#8f8081"/><path d="M8 26A8 8 0 1 1 14 13L22 19Z" fill="#c9bfc0"/><circle cx="25" cy="20" r="7" fill="#ddd6d6"/><path d="M2 24Q9 18 18 15L31 23Q31 27 27 27H6Q2 27 2 24Z" fill="#fff"/></svg>
  <span class="lang">ENG<br>IN</span>
  <svg class="s32" viewBox="0 0 32 32" fill="none" stroke="#fff" stroke-width="2.200"><path d="M1 13A21 21 0 0 1 31 13M5 18A16 16 0 0 1 27 18M10 22A9 9 0 0 1 22 22"/><circle cx="16" cy="25" r="2.500" fill="#fff" stroke="none"/></svg>
  <svg class="s32" viewBox="0 0 32 32" fill="none" stroke="#fff" stroke-width="2"><path d="M1 12H6L14 5V28L6 21H1ZM18 11Q21 16 18 22M22 7Q27 16 22 26M26 3Q33 16 26 29"/></svg>
  <svg class="s32" viewBox="0 0 32 32" fill="none" stroke="#fff" stroke-width="2"><rect x="1" y="7" width="27" height="18" rx="4"/><path d="M5 10H14V22H5Z" fill="#fff" stroke="none"/><path d="M30 13V19" stroke-width="4"/></svg>
  <span class="clock">19:55<br>28-05-2022</span>
  <span class="count">23</span>
</div>
</body>
</html>
```
FILE: styles.css
```css
* { box-sizing: border-box; }
html, body { height: 100%; margin: 0; }
body { display: flex; flex-direction: column; background: #efefef; color: #242424; font-family: "Open Sans", "Noto Sans", sans-serif; font-size: 23px; overflow: hidden; }
button, input, select { font: inherit; color: inherit; border: 0; background: none; padding: 0; margin: 0; min-width: 0; }
button { display: flex; align-items: center; justify-content: center; flex: none; }
a { color: inherit; text-decoration: none; }
svg { display: block; flex: none; overflow: visible; }
.defs { position: absolute; width: 0; height: 0; }
.grow { flex: 1; }
.s16 { width: 16px; height: 16px; }
.s20 { width: 20px; height: 20px; }
.s24 { width: 24px; height: 24px; }
.s28 { width: 28px; height: 28px; }
.s30 { width: 30px; height: 28px; }
.s32 { width: 32px; height: 32px; }
.s48 { width: 48px; height: 48px; }
.s64 { width: 64px; height: 64px; }
.chev { width: 12px; height: 8px; }
.chevlg { width: 20px; height: 12px; }

/* title bar */
.titlebar { flex: none; height: 96px; display: grid; grid-template-columns: 1fr 738px 1fr; align-items: center; padding-left: 32px; }
.title-left, .title-right { display: flex; align-items: center; }
.autosave { display: flex; align-items: center; gap: 12px; margin: 0 24px 0 32px; }
.toggle { width: 84px; height: 40px; border: 2px solid #616161; border-radius: 20px; background: #fff; display: flex; align-items: center; gap: 8px; padding: 0 4px; color: #616161; font-size: 22px; }
.toggle input { appearance: none; width: 0; height: 0; position: absolute; }
.knob { width: 28px; height: 28px; border-radius: 50%; background: #616161; }
.doc { margin-left: 34px; font-size: 24px; }
.search { display: flex; align-items: center; gap: 24px; height: 64px; padding: 0 38px; border: 2px solid #d1d1d1; border-radius: 8px; background: #fafafa; font-size: 26px; }
.search input { flex: 1; outline: 0; }
.search input::placeholder { color: #616161; opacity: 1; }
.title-right { justify-content: flex-end; }
.user { margin-right: 19px; }
.avatar { width: 48px; height: 48px; margin-right: 24px; }
.win { height: 96px; }
.w92 { width: 92px; } .w96 { width: 96px; }

/* ribbon tabs */
.tabs { flex: none; display: flex; align-items: center; height: 60px; padding: 0 23px 0 42px; gap: 40px; font-size: 25px; }
.tabs a { height: 48px; line-height: 50px; border-bottom: 4px solid transparent; }
.tabs a.on { font-weight: 600; border-color: #107c41; }
.tabs .file { margin-right: 10px; }
.pill { height: 48px; gap: 8px; padding: 0 16px; border: 2px solid #d1d1d1; border-radius: 8px; background: #fff; font-weight: 600; }
.pill.share { background: #107c41; border-color: #107c41; color: #fff; margin-left: -24px; }

/* ribbon */
.ribbon { flex: none; display: flex; height: 200px; margin: 0 16px; border: 2px solid #d1d1d1; border-radius: 16px; background: #fff; padding: 8px 0 10px; }
.group { display: flex; flex-direction: column; border-right: 2px solid #d1d1d1; flex: none; }
.body { flex: 1; display: flex; align-items: flex-start; padding-left: 16px; min-height: 0; }
.g-undo { width: 118px; } .g-undo .body { padding-left: 28px; }
.g-clip { width: 200px; } .g-clip .body { padding-left: 14px; }
.g-font { width: 472px; }
.g-align { width: 394px; }
.g-num { width: 324px; }
.g-styles { width: 395px; } .g-styles .body { padding-left: 14px; }
.g-cells { width: 199px; } .g-cells .body { padding-left: 24px; }
.g-edit { width: 301px; } .g-edit .body { padding-left: 20px; }
.g-analysis { width: 124px; } .g-analysis .body { padding-left: 0; }
.foot { display: flex; align-items: center; height: 18px; font-size: 20px; line-height: 18px; }
.foot span { flex: 1; text-align: center; }
.stack { display: flex; flex-direction: column; gap: 8px; }
.line { display: flex; align-items: center; height: 44px; }
.line.tall { height: 48px; }
.line button { height: 100%; }
.dim { color: #bdbdbd; }
.rows { display: flex; flex-direction: column; align-items: flex-start; gap: 16px; padding-top: 14px; }
.gap4 { gap: 4px; }
.gap4 .w20 { margin-left: -4px; }
.big { flex-direction: column; justify-content: flex-start; padding-top: 4px; line-height: 32px; }
.big .s64 { margin-bottom: 6px; }
.big > span { display: flex; align-items: center; gap: 8px; white-space: nowrap; }
.big > .chev { margin-top: 10px; }
.cmd { height: 44px; gap: 8px; }
.cmd .far { margin-left: 16px; }
.ln { width: 32px; height: 32px; fill: none; stroke: #3b3a38; stroke-width: 2; }
.pressed { background: #eaeaea; border: 2px solid #616161; border-radius: 8px; }
.sep { display: block; height: 48px; background: linear-gradient(#d1d1d1, #d1d1d1) center / 2px 100% no-repeat; }
.sep.long { height: 124px; margin-top: 12px; }
.combo { position: relative; display: flex; height: 48px; border: 2px solid #c8c8c8; border-radius: 8px; margin-right: 4px; font-size: 22px; }
.combo select { appearance: none; flex: 1; padding-left: 4px; }
.combo .chev { position: absolute; right: 5px; top: 19px; }
.bold { font-weight: 700; font-size: 24px; }
.ital { font-family: "Liberation Serif", serif; font-style: italic; font-size: 28px; }
.under { font-size: 24px; text-decoration: underline; text-underline-offset: 5px; }
.w14 { width: 14px; } .w20 { width: 20px; } .w22 { width: 22px; } .w26 { width: 26px; } .w28 { width: 28px; }
.w30 { width: 30px; } .w32 { width: 32px; } .w36 { width: 36px; } .w40 { width: 40px; } .w42 { width: 42px; }
.w44 { width: 44px; } .w48 { width: 48px; } .w50 { width: 50px; } .w52 { width: 52px; } .w56 { width: 56px; }
.w60 { width: 60px; } .w84 { width: 84px; } .w88 { width: 88px; } .w94 { width: 94px; } .w100 { width: 100px; }
.w118 { width: 118px; } .w122 { width: 122px; } .w152 { width: 152px; } .w232 { width: 232px; } .w256 { width: 256px; } .w292 { width: 292px; }
.collapse { margin-left: auto; align-self: flex-end; padding: 10px 16px; }

/* formula bar */
.fbar { flex: none; display: flex; height: 44px; margin: 16px 16px 14px; font-size: 24px; }
.namebox, .fx, .formula { display: flex; align-items: center; background: #fff; border: 1px solid #d1d1d1; border-radius: 8px; }
.namebox { width: 202px; padding: 0 10px 0 6px; }
.namebox input, .formula input { flex: 1; outline: 0; height: 100%; }
.dots { width: 4px; height: 20px; background: repeating-linear-gradient(#9a9a9a 0 4px, transparent 4px 8px); }
.fbar .dots { margin: 12px 18px 0; }
.fx { width: 146px; justify-content: space-between; padding: 0 10px; }
.fn { font-family: "Liberation Serif", serif; font-style: italic; font-size: 34px; line-height: 36px; }
.formula { flex: 1; margin-left: 8px; padding: 0 8px 0 21px; }

/* worksheet */
.work { flex: 1; display: flex; min-height: 0; }
.grid { position: relative; flex: 1; overflow: hidden; background: #fff; border-right: 1px solid #ababab; }
table { width: 100%; table-layout: fixed; border-collapse: separate; border-spacing: 0; }
.c0 { width: 92px; } .ca { width: 132px; } .cb { width: 296px; } .cd { width: 830px; } .ce { width: 238px; }
th { font-weight: 400; font-size: 43px; color: #444; background: #efefef; padding: 0; }
thead th { height: 65px; line-height: 64px; border-right: 1px solid #dcdcdc; border-bottom: 1px solid #ababab; }
thead th.sel { background: #e1e1e1; color: #217346; border-right-color: #bdbdbd; }
thead .corner { border-right-color: #ababab; }
.tri { width: 58px; height: 58px; margin-left: 31px; }
tbody th { height: 67px; line-height: 66px; vertical-align: bottom; padding-left: 2px; border-right: 1px solid #ababab; border-bottom: 1px solid #d9d9d9; }
tbody td { height: 67px; line-height: 66px; vertical-align: bottom; padding: 0 7px; border-right: 1px solid #e1e1e1; border-bottom: 1px solid #e1e1e1; font-family: Lato, sans-serif; font-size: 47px; font-variant-ligatures: none; color: #000; white-space: nowrap; }
.s th { background: #e1e1e1; color: #217346; border-bottom-color: #b5b5b5; }
.s td:nth-child(-n+5) { background: #c6c6c6; border-color: #ababab; }
.s td.active { background: #fff; text-align: center; }
.mid { text-align: center; }
.num { text-align: right; }
.selection { position: absolute; left: 90px; top: 63px; width: 1558px; height: 472px; border: 3px solid #217346; }
.handle { position: absolute; right: -4px; bottom: -4px; width: 10px; height: 10px; background: #217346; border: 1px solid #fff; border-width: 1px 0 0 1px; }
.ink { position: absolute; left: 1560px; top: 270px; width: 700px; height: 360px; }
.vscroll { width: 38px; background: #f3f3f3; display: flex; flex-direction: column; align-items: center; gap: 8px; padding: 12px 0 8px; }
.arr { width: 16px; height: 12px; fill: #6e6e6e; }
.vscroll .track { flex: 1; width: 16px; }
.track i { display: block; background: #6e6e6e; border-radius: 8px; }
.vscroll .track i { height: 85%; }

/* sheet tabs */
.sheets { flex: none; display: flex; align-items: flex-start; height: 45px; background: #f5f5f5; border-top: 2px solid #ababab; border-bottom: 2px solid #fff; }
.nav { width: 43px; height: 40px; } .nav:first-child { margin-left: 17px; }
.na { width: 9px; height: 16px; }
.sheet { height: 42px; margin: -2px 0 0 42px; padding: 0 12px; background: #fff; border: 1px solid #ababab; border-width: 0 1px 2px; border-bottom-color: #217346; color: #217346; font-weight: 700; font-size: 25px; line-height: 38px; }
.add { margin-left: 48px; height: 40px; }
.split { width: 42px; height: 41px; background: #efefef; display: flex; align-items: center; justify-content: center; }
.hscroll { width: 1040px; margin-right: 36px; height: 40px; display: flex; align-items: center; gap: 10px; padding: 0 10px; }
.ah { width: 14px; height: 18px; fill: #6e6e6e; }
.hscroll .track { flex: 1; }
.hscroll .track i { height: 16px; width: 87%; }

/* status bar */
.status { flex: none; display: flex; align-items: center; height: 42px; background: #f4f4f4; font-size: 20px; padding: 0 15px; color: #333; }
.ready { width: 93px; }
.macro { margin-right: 36px; }
.s30 { margin-right: 4px; }
.w144 { width: 143px; } .w120 { width: 119px; } .w92l { width: 92px; } .w98 { width: 98px; }
.view { width: 80px; height: 42px; }
.view.on { background: #e0e0e0; }
.view svg { fill: none; stroke: #222; stroke-width: 2; }
.zm { width: 16px; }
.view + .zm { margin-left: 13px; }
.zoom { appearance: none; width: 200px; height: 24px; margin: 0 10px; background: linear-gradient(#8a8a8a, #8a8a8a) center / 2px 12px no-repeat, linear-gradient(#6e6e6e, #6e6e6e) center / 100% 2px no-repeat; }
.zoom::-webkit-slider-thumb { appearance: none; width: 10px; height: 22px; background: #5f5f5f; }
.pct { margin-left: auto; padding-left: 23px; }

/* taskbar */
.taskbar { flex: none; display: flex; align-items: center; height: 96px; padding: 0 35px 0 21px; color: #fff; font-size: 23px; line-height: 32px;
  background: radial-gradient(ellipse 460px 80px at 86% 0, #27242d, transparent), radial-gradient(ellipse 500px 60px at 70% 0, #35201e, transparent), linear-gradient(90deg, #431710, #481311 5%, #471311 20%, #301b1d 26%, #371a1c 38%, #431614 46%, #481311 54%, #3e1917 62%, #481412 72%, #471311 90%, #431a11); }
.taskbar button { width: 88px; height: 96px; position: relative; }
.run::after, .active-app::after { content: ""; position: absolute; bottom: 10px; left: 38px; width: 12px; height: 6px; border-radius: 3px; background: #a39797; }
.taskbar .active-app { width: 80px; height: 80px; margin: 0 4px; border: 2px solid #552f2e; border-radius: 8px; background: #4a2725; }
.active-app::after { bottom: 0; left: 22px; width: 32px; background: #4cc2ff; }
.id1 span, .id2 span { display: block; width: 42px; height: 42px; margin-top: -4px; border-radius: 8px; background: #49021f; color: #ff3366; font-weight: 600; font-size: 24px; line-height: 38px; text-align: center; }
.id2 span { width: 46px; height: 46px; margin-top: 0; border: 2px solid #d7307e; border-radius: 0; background: #2a0412; color: #ff3694; }
.wa b { position: absolute; right: 9px; top: 14px; width: 32px; height: 32px; border-radius: 50%; background: #ff0000; font-weight: 400; font-size: 23px; line-height: 32px; text-align: center; }
.taskbar .tray { width: 26px; margin-right: 35px; }
.tc { width: 26px; height: 14px; }
.lang { width: 120px; text-align: center; }
.taskbar > .s32 + .s32 { margin-left: 16px; }
.clock { width: 138px; margin-left: 16px; text-align: right; font-size: 24px; }
.count { width: 40px; height: 32px; margin-left: 11px; border-radius: 16px; background: #4cc2ff; color: #111; font-size: 22px; line-height: 32px; text-align: center; }
```
